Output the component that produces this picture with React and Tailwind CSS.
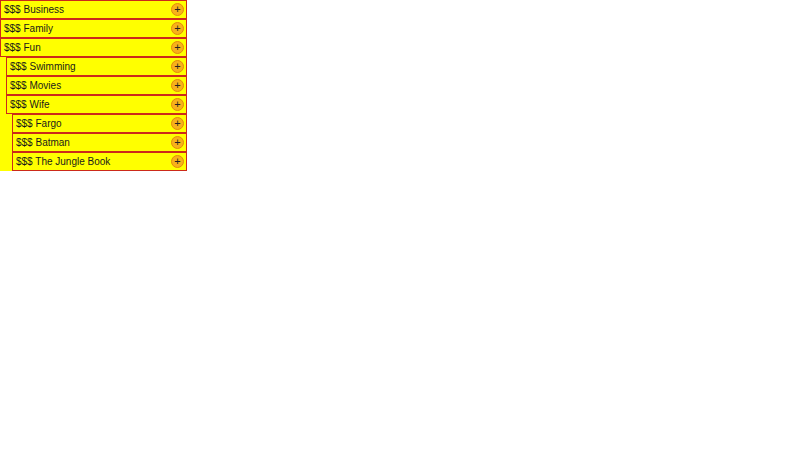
import React from 'react';

const tree = [
    { name: 'Business' },
    { name: 'Family' },
    {
        name: 'Fun',
        children: [
            { name: 'Swimming' },
            { name: 'Movies' },
            {
                name: 'Wife',
                children: [
                    { name: 'Fargo' },
                    { name: 'Batman' },
                    { name: 'The Jungle Book' }
                ]
            }
        ]
    }
];

const Row = ({ name }) => (
    <div className="flex items-center justify-between h-[19px] border border-[#cc2a1a] bg-[#ffff00] pl-[3px] pr-[2px]">
        <span className="text-[10px] leading-none text-[#1a1a1a]">$$$ {name}</span>
        <span className="flex items-center justify-center w-[13px] h-[13px] rounded-full bg-[#f7b21a] border border-[#e58a0a] text-[11px] leading-none text-[#222]">
            +
        </span>
    </div>
);

const Branch = ({ items, level }) => (
    <div className={level > 0 ? 'pl-[6px]' : ''}>
        {items.map(item => (
            <div key={item.name}>
                <Row name={item.name} />
                {item.children && <Branch items={item.children} level={level + 1} />}
            </div>
        ))}
    </div>
);

export default function App() {
    return (
        <div className="w-[187px] bg-[#ffff00]" style={{ fontFamily: '"Liberation Sans", Arial, sans-serif' }}>
            <Branch items={tree} level={0} />
        </div>
    );
}
